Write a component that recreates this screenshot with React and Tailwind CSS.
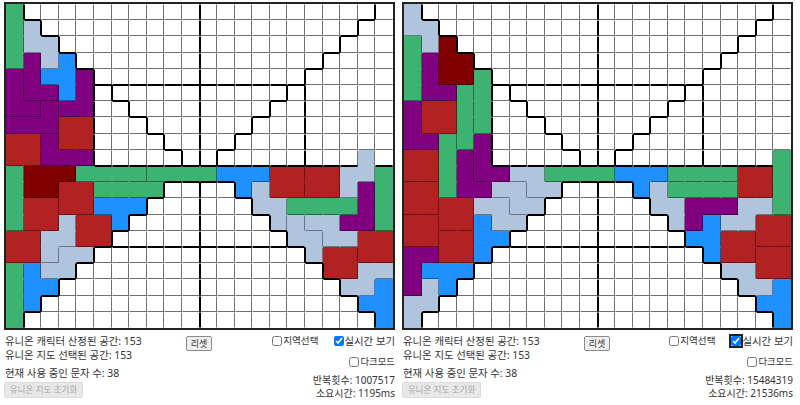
import { useMemo } from 'react'

const COLORS = {
  g: 'bg-[#3cb371]',
  p: 'bg-[#800080]',
  r: 'bg-[#b22222]',
  d: 'bg-[#800000]',
  b: 'bg-[#1e90ff]',
  l: 'bg-[#b0c4de]',
}

const LEFT_PIECES = [
  ['g', '0,0 0,1 0,2 0,3'],
  ['l', '1,1 1,2 2,2 2,3'],
  ['p', '1,3 1,4 1,5 2,5'],
  ['b', '3,3 3,4 3,5 2,4'],
  ['p', '0,4 0,5 0,6 1,6'],
  ['p', '4,4 4,5 4,6 3,6'],
  ['p', '2,6 0,7 1,7 2,7'],
  ['r', '3,7 4,7 3,8 4,8'],
  ['r', '0,8 1,8 0,9 1,9'],
  ['p', '2,8 2,9 3,9 4,9'],
  ['g', '0,10 0,11 0,12 0,13'],
  ['d', '1,10 2,10 3,10 1,11 2,11'],
  ['g', '4,10 5,10 6,10 7,10'],
  ['g', '8,10 9,10 10,10 11,10'],
  ['r', '3,11 4,11 3,12 4,12'],
  ['g', '5,11 6,11 7,11 8,11'],
  ['b', '5,12 6,12 7,12 6,13'],
  ['r', '1,12 2,12 1,13 2,13'],
  ['l', '3,13 3,14 2,14 2,15'],
  ['r', '4,13 5,13 4,14 5,14'],
  ['r', '0,14 1,14 0,15 1,15'],
  ['l', '3,15 4,15 2,16 3,16'],
  ['g', '0,16 0,17 0,18 0,19'],
  ['b', '1,16 1,17 1,18 2,17'],
  ['b', '12,10 13,10 14,10 13,11'],
  ['r', '15,10 16,10 15,11 16,11'],
  ['r', '17,10 18,10 17,11 18,11'],
  ['l', '20,9 19,10 20,10 19,11'],
  ['g', '21,10 21,11 21,12 21,13'],
  ['p', '20,11 20,12 20,13 19,13'],
  ['g', '16,12 17,12 18,12 19,12'],
  ['l', '14,11 14,12 15,12 15,13'],
  ['l', '16,13 16,14 17,14 17,15'],
  ['l', '17,13 18,13 18,14 19,14'],
  ['r', '20,14 21,14 20,15 21,15'],
  ['r', '18,15 19,15 18,16 19,16'],
  ['l', '20,16 21,16 19,17 20,17'],
  ['b', '21,17 21,18 21,19 20,18'],
]

const RIGHT_PIECES = [
  ['l', '0,0 0,1 1,1 1,2'],
  ['g', '0,2 0,3 0,4 0,5'],
  ['d', '2,2 2,3 3,3 2,4 3,4'],
  ['p', '1,3 1,4 1,5 2,5'],
  ['g', '3,5 3,6 3,7 3,8'],
  ['g', '4,4 4,5 4,6 4,7'],
  ['p', '0,6 0,7 0,8 1,8'],
  ['r', '1,6 2,6 1,7 2,7'],
  ['g', '2,8 2,9 2,10 2,11'],
  ['r', '0,9 1,9 0,10 1,10'],
  ['p', '3,9 3,10 3,11 4,11'],
  ['p', '4,8 4,9 4,10 5,10'],
  ['l', '6,10 7,10 7,11 8,11'],
  ['g', '8,10 9,10 10,10 11,10'],
  ['l', '5,11 6,11 6,12 7,12'],
  ['l', '4,12 5,12 5,13 6,13'],
  ['r', '0,11 1,11 0,12 1,12'],
  ['r', '0,13 1,13 0,14 1,14'],
  ['r', '2,12 3,12 2,13 3,13'],
  ['r', '2,14 3,14 2,15 3,15'],
  ['b', '4,13 4,14 4,15 5,14'],
  ['p', '0,15 1,15 0,16 0,17'],
  ['b', '1,16 2,16 3,16 2,17'],
  ['l', '1,17 1,18 0,18 0,19'],
  ['b', '12,10 13,10 14,10 13,11'],
  ['g', '15,10 16,10 17,10 18,10'],
  ['g', '15,11 16,11 17,11 18,11'],
  ['r', '19,10 20,10 19,11 20,11'],
  ['g', '21,9 21,10 21,11 21,12'],
  ['l', '14,11 14,12 15,12 15,13'],
  ['p', '16,12 17,12 18,12 16,13'],
  ['l', '19,12 20,12 18,13 19,13'],
  ['b', '17,13 17,14 17,15 16,14'],
  ['r', '20,13 21,13 20,14 21,14'],
  ['r', '18,14 19,14 18,15 19,15'],
  ['r', '20,15 21,15 20,16 21,16'],
  ['l', '18,16 19,16 19,17 20,17'],
  ['b', '21,17 21,18 21,19 20,18'],
]

// region outlines, "x,y" = edge on the left (V) or top (H) of that cell
const THICK_V = new Set([
  '1,0', '2,1', '3,2', '4,3', '5,4', '5,5', '5,6', '5,7', '5,8', '5,9',
  '6,5', '7,6', '8,7', '9,8', '10,9',
  '16,5', '15,6', '14,7', '13,8', '12,9',
  '21,0', '20,1', '19,2', '18,3', '17,4', '17,5', '17,6', '17,7', '17,8', '17,9',
  '9,11', '8,12', '7,13', '6,14', '5,15', '4,16', '3,17', '2,18', '1,19',
  '13,11', '14,12', '15,13', '16,14', '17,15', '18,16', '19,17', '20,18', '21,19',
  ...Array.from({ length: 20 }, (_, y) => `11,${y}`),
])

const THICK_H = new Set([
  '1,1', '2,2', '3,3', '4,4',
  '6,6', '7,7', '8,8', '9,9',
  '15,6', '14,7', '13,8', '12,9',
  '20,1', '19,2', '18,3', '17,4',
  '9,11', '10,11', '11,11', '12,11',
  '8,12', '7,13', '6,14', '4,16', '3,17', '2,18', '1,19',
  '13,12', '14,13', '15,14', '17,16', '18,17', '19,18', '20,19',
  ...Array.from({ length: 22 }, (_, x) => `${x},10`),
  ...Array.from({ length: 12 }, (_, i) => `${i + 5},5`),
  ...Array.from({ length: 12 }, (_, i) => `${i + 5},15`),
])

function edgeKind(a, b, thick) {
  if (a && b) {
    return a.id === b.id ? 'none' : 'piece'
  }
  return thick ? 'thick' : 'line'
}

// same-piece edges take the cell's own colour, so no light seam shows
const OWN_RIGHT = {
  g: 'border-r-[#3cb371]',
  p: 'border-r-[#800080]',
  r: 'border-r-[#b22222]',
  d: 'border-r-[#800000]',
  b: 'border-r-[#1e90ff]',
  l: 'border-r-[#b0c4de]',
}

const OWN_BOTTOM = {
  g: 'border-b-[#3cb371]',
  p: 'border-b-[#800080]',
  r: 'border-b-[#b22222]',
  d: 'border-b-[#800000]',
  b: 'border-b-[#1e90ff]',
  l: 'border-b-[#b0c4de]',
}

const OWN_LEFT = {
  g: 'border-l-[#3cb371]',
  p: 'border-l-[#800080]',
  r: 'border-l-[#b22222]',
  d: 'border-l-[#800000]',
  b: 'border-l-[#1e90ff]',
  l: 'border-l-[#b0c4de]',
}

const OWN_TOP = {
  g: 'border-t-[#3cb371]',
  p: 'border-t-[#800080]',
  r: 'border-t-[#b22222]',
  d: 'border-t-[#800000]',
  b: 'border-t-[#1e90ff]',
  l: 'border-t-[#b0c4de]',
}

// edges between two pieces are a darker shade of the cell
const SEAM_RIGHT = {
  g: 'border-r-[#246b44]',
  p: 'border-r-[#4a004a]',
  r: 'border-r-[#6b1414]',
  d: 'border-r-[#4a0000]',
  b: 'border-r-[#125799]',
  l: 'border-r-[#6a7685]',
}

const SEAM_BOTTOM = {
  g: 'border-b-[#246b44]',
  p: 'border-b-[#4a004a]',
  r: 'border-b-[#6b1414]',
  d: 'border-b-[#4a0000]',
  b: 'border-b-[#125799]',
  l: 'border-b-[#6a7685]',
}

function rightEdge(kind, color) {
  if (kind === 'piece') return SEAM_RIGHT[color]
  if (kind === 'line') return 'border-r-[#707070]'
  if (kind === 'thick') return 'border-r-black'
  return color ? OWN_RIGHT[color] : 'border-r-white'
}

function bottomEdge(kind, color) {
  if (kind === 'piece') return SEAM_BOTTOM[color]
  if (kind === 'line') return 'border-b-[#707070]'
  if (kind === 'thick') return 'border-b-black'
  return color ? OWN_BOTTOM[color] : 'border-b-white'
}

function buildCells(pieces) {
  const map = {}
  pieces.forEach(([color, cells], id) => {
    cells.split(' ').forEach(key => {
      map[key] = { id, color }
    })
  })

  const list = []
  for (let y = 0; y < 20; y++) {
    for (let x = 0; x < 22; x++) {
      const cell = map[`${x},${y}`]
      const color = cell?.color
      const right = x < 21 ? edgeKind(cell, map[`${x + 1},${y}`], THICK_V.has(`${x + 1},${y}`)) : 'none'
      const bottom = y < 19 ? edgeKind(cell, map[`${x},${y + 1}`], THICK_H.has(`${x},${y + 1}`)) : 'none'
      const left = x > 0 ? edgeKind(map[`${x - 1},${y}`], cell, THICK_V.has(`${x},${y}`)) : 'none'
      const top = y > 0 ? edgeKind(map[`${x},${y - 1}`], cell, THICK_H.has(`${x},${y}`)) : 'none'

      const leftClass = left === 'thick' ? 'border-l-black' : color ? OWN_LEFT[color] : 'border-l-white'
      const topClass = top === 'thick' ? 'border-t-black' : color ? OWN_TOP[color] : 'border-t-white'

      list.push({
        key: `${x},${y}`,
        className: [
          'border',
          color ? COLORS[color] : 'bg-white',
          rightEdge(right, color),
          bottomEdge(bottom, color),
          leftClass,
          topClass,
        ].join(' '),
      })
    }
  }
  return list
}

const Board = ({ pieces }) => {
  const cells = useMemo(() => buildCells(pieces), [pieces])

  return (
    <div className='w-[391px] border-2 border-[#222]'>
      <div className='grid grid-cols-[repeat(22,minmax(0,1fr))] grid-rows-[repeat(20,minmax(0,1fr))] h-[324px]'>
        {cells.map(cell => (
          <div key={cell.key} className={cell.className} />
        ))}
      </div>
    </div>
  )
}

const Check = ({ label, checked, focused, textSize }) => (
  <label className={`flex items-center gap-[1px] ${textSize}`}>
    <input
      type='checkbox'
      defaultChecked={checked}
      className={`w-[10px] h-[10px] m-0 accent-[#0075ff] ${focused ? 'outline-2 outline-[#222] rounded-[2px] mr-[1px]' : ''}`}
    />
    {label}
  </label>
)

const Panel = ({ pieces, iterations, elapsed, focused }) => (
  <div className='w-[391px]'>
    <Board pieces={pieces} />

    <div className='flex text-[10.4px] leading-[14px] text-[#333] pl-[1px] pt-[4px]'>
      <div className='w-[182px] shrink-0'>
        <p>유니온 캐릭터 산정된 공간: 153</p>
        <p>유니온 지도 선택된 공간: 153</p>
        <p className='mt-[4px]'>현재 사용 중인 문자 수: 38</p>
        <button disabled className='mt-[2px] -ml-[1px] h-[16px] w-[79px] flex items-center justify-center bg-[#e8e8e8] border border-[#dcdcdc] rounded-[2px] text-[8.6px] text-[#a8a8a8]'>
          유니온 지도 초기화
        </button>
      </div>

      <button className='h-[15px] w-[26px] mt-[2px] -ml-[1px] flex items-center justify-center bg-[#efefef] border border-[#8a8a8a] rounded-[2px] text-[9px] text-[#333]'>
        리셋
      </button>

      <div className='flex-1 flex flex-col items-end'>
        <div className='flex gap-[15px]'>
          <Check label='지역선택' textSize='text-[9.6px]' />
          <Check label='실시간 보기' textSize='text-[10.4px]' checked focused={focused} />
        </div>
        <div className='mt-[7px]'>
          <Check label='다크모드' textSize='text-[9.4px]' />
        </div>
        <p className='mt-[4px] text-[10px]'>반복횟수: {iterations}</p>
        <p className='-mt-[1px] text-[10px]'>소요시간: {elapsed}ms</p>
      </div>
    </div>
  </div>
)

const App = () => {
  return (
    <div className="w-[800px] h-[405px] overflow-hidden bg-white font-['Noto_Sans','Noto_Sans_CJK_KR',sans-serif] flex gap-[7px] pl-[4px] pt-[2px]">
      <Panel pieces={LEFT_PIECES} iterations={1007517} elapsed={1195} />
      <Panel pieces={RIGHT_PIECES} iterations={15484319} elapsed={21536} focused />
    </div>
  )
}

export default App
